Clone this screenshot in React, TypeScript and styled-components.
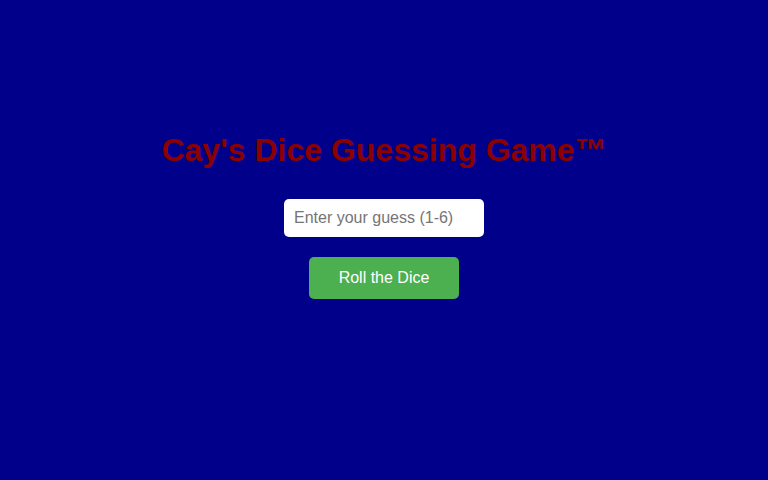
import * as React from 'react';
import styled, { createGlobalStyle } from 'styled-components';

const GlobalStyle = createGlobalStyle`
    html, body {
        margin: 0;
        padding: 0;
        height: 100%;
        background: #00008b;
    }
    #root {
        min-height: 100%;
    }
`;

const Page = styled.div`
    width: 768px;
    height: 480px;
    background: #00008b;
    font-family: "Liberation Sans", Arial, sans-serif;
    display: flex;
    flex-direction: column;
    align-items: center;
    padding-top: 132px;
    box-sizing: border-box;
`;

const Title = styled.h1`
    margin: 0 0 30px;
    font-size: 32px;
    line-height: 37px;
    font-weight: bold;
    color: #8b0000;
`;

const GuessInput = styled.input`
    width: 200px;
    height: 38px;
    box-sizing: border-box;
    padding: 0 10px;
    border: none;
    border-radius: 5px;
    background: #fff;
    font-family: inherit;
    font-size: 16px;
    color: #222;
    outline: none;

    &::placeholder {
        color: #757575;
    }
`;

const RollButton = styled.button`
    margin-top: 20px;
    width: 150px;
    height: 42px;
    border: none;
    border-radius: 5px;
    background: #4caf50;
    color: #fff;
    font-family: inherit;
    font-size: 16px;
    cursor: pointer;
`;

export default function App() {
    const [guess, setGuess] = React.useState('');

    return (
        <>
            <GlobalStyle />
            <Page>
                <Title>Cay's Dice Guessing Game™</Title>
                <GuessInput
                    type="text"
                    placeholder="Enter your guess (1-6)"
                    value={guess}
                    onChange={e => setGuess(e.target.value)}
                />
                <RollButton>Roll the Dice</RollButton>
            </Page>
        </>
    );
}
